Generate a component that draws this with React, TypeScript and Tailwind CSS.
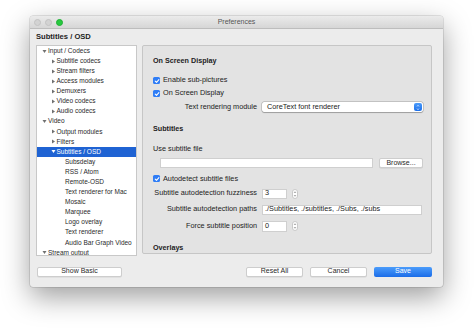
import React from 'react';

type TreeItem = { label: string; level: number; arrow?: 'open' | 'closed'; selected?: boolean };

const TREE: TreeItem[] = [
  { label: 'Input / Codecs', level: 0, arrow: 'open' },
  { label: 'Subtitle codecs', level: 1, arrow: 'closed' },
  { label: 'Stream filters', level: 1, arrow: 'closed' },
  { label: 'Access modules', level: 1, arrow: 'closed' },
  { label: 'Demuxers', level: 1, arrow: 'closed' },
  { label: 'Video codecs', level: 1, arrow: 'closed' },
  { label: 'Audio codecs', level: 1, arrow: 'closed' },
  { label: 'Video', level: 0, arrow: 'open' },
  { label: 'Output modules', level: 1, arrow: 'closed' },
  { label: 'Filters', level: 1, arrow: 'closed' },
  { label: 'Subtitles / OSD', level: 1, arrow: 'open', selected: true },
  { label: 'Subsdelay', level: 2 },
  { label: 'RSS / Atom', level: 2 },
  { label: 'Remote-OSD', level: 2 },
  { label: 'Text renderer for Mac', level: 2 },
  { label: 'Mosaic', level: 2 },
  { label: 'Marquee', level: 2 },
  { label: 'Logo overlay', level: 2 },
  { label: 'Text renderer', level: 2 },
  { label: 'Audio Bar Graph Video', level: 2 },
  { label: 'Stream output', level: 0, arrow: 'open' },
];

const INDENT = ['pl-[5px]', 'pl-[13.5px]', 'pl-[28px]'];

const Arrow = ({ open, white }: { open: boolean; white?: boolean }) => (
  <svg width="5" height="5" viewBox="0 0 10 10" className="mr-[1px] shrink-0">
    {open ? (
      <path d="M1 2 L9 2 L5 8 Z" fill={white ? '#fff' : '#707070'} />
    ) : (
      <path d="M2 1 L8 5 L2 9 Z" fill={white ? '#fff' : '#707070'} />
    )}
  </svg>
);

const Check = () => (
  <span className="w-[7px] h-[7px] rounded-[1.5px] bg-[#2f7df6] flex items-center justify-center shrink-0">
    <svg width="6" height="6" viewBox="0 0 10 10">
      <path d="M2 5.2 L4.2 7.4 L8.2 2.6" stroke="#fff" strokeWidth="1.7" fill="none" strokeLinecap="round" strokeLinejoin="round" />
    </svg>
  </span>
);

const Stepper = () => (
  <span className="ml-[5px] w-[6px] h-[10px] rounded-[3px] bg-white border border-[#c9c9c9] flex flex-col items-center justify-center">
    <svg width="4" height="8" viewBox="0 0 8 16">
      <path d="M2 6 L4 3.5 L6 6 M2 10 L4 12.5 L6 10" stroke="#707070" strokeWidth="1.2" fill="none" />
    </svg>
  </span>
);

const Field = ({ w, children }: { w: string; children?: React.ReactNode }) => (
  <div className={`${w} h-[10.5px] bg-white border border-[#cfcfcf] flex items-center px-[2px] text-[7.3px] text-[#222] whitespace-nowrap overflow-hidden`}>{children}</div>
);

const Btn = ({ w, children }: { w: string; children: React.ReactNode }) => (
  <div className={`${w} h-[10px] bg-white rounded-[2px] border border-[#cdcdcd] shadow-[0_0.5px_0_rgba(0,0,0,0.1)] flex items-center justify-center text-[7px] text-[#2a2a2a]`}>{children}</div>
);

export default function App() {
  return (
    <div className="w-[474px] h-[330px] bg-white overflow-hidden" style={{ fontFamily: '"Liberation Sans", Arial, sans-serif' }}>
      <div className="ml-[30px] mt-[16px] w-[413px] h-[271px] rounded-[3px] bg-[#ececec] shadow-[0_10px_28px_rgba(0,0,0,0.38),0_0_0_0.5px_rgba(0,0,0,0.2)] flex flex-col overflow-hidden">
        {/* title bar */}
        <div className="relative h-[13px] bg-gradient-to-b from-[#ebebeb] to-[#d6d6d6] border-b border-[#bdbdbd] flex items-center pl-[4px] shrink-0">
          <div className="flex gap-[4px]">
            <span className="w-[7px] h-[7px] rounded-full bg-[#d3d3d3] border border-[#c2c2c2]" />
            <span className="w-[7px] h-[7px] rounded-full bg-[#d3d3d3] border border-[#c2c2c2]" />
            <span className="w-[7px] h-[7px] rounded-full bg-[#27c93f] border border-[#1fae33]" />
          </div>
          <div className="absolute inset-0 flex items-center justify-center text-[7px] text-[#555]">Preferences</div>
        </div>

        <div className="flex-1 flex flex-col pl-[6px] pr-[11px]">
          <div className="h-[16px] flex items-center text-[7.6px] font-bold text-[#1e1e1e]">Subtitles / OSD</div>

          <div className="flex gap-[5px] h-[211px]">
            {/* tree */}
            <div className="w-[101px] h-[211px] bg-white border border-[#c8c8c8] overflow-hidden">
              {TREE.map((t) => (
                <div
                  key={t.label}
                  className={`h-[10.1px] flex items-center ${INDENT[t.level]} text-[6.5px] leading-none ${
                    t.selected ? 'bg-[#1f63d3] text-white' : 'text-[#2a2a2a]'
                  }`}
                >
                  {t.arrow && <Arrow open={t.arrow === 'open'} white={t.selected} />}
                  <span>{t.label}</span>
                </div>
              ))}
            </div>

            {/* settings panel */}
            <div className="flex-1 h-[209px] bg-[#e3e3e3] border border-[#c6c6c6] rounded-[2px] flex flex-col pl-[10px] text-[7.3px] text-[#222]">
              <div className="mt-[10px] h-[10px] flex items-center text-[7.2px] font-bold">On Screen Display</div>
              <div className="mt-[9.7px] h-[10px] flex items-center gap-[3px]">
                <Check />
                <span>Enable sub-pictures</span>
              </div>
              <div className="mt-[3px] h-[10px] flex items-center gap-[3px]">
                <Check />
                <span>On Screen Display</span>
              </div>
              <div className="mt-[3.8px] h-[10px] flex items-center">
                <span className="w-[105px] text-right pr-[1px] whitespace-nowrap">Text rendering module</span>
                <div className="ml-[4px] w-[161px] h-[10px] bg-white rounded-[2px] shadow-[0_0_0_0.5px_rgba(0,0,0,0.25),0_0.5px_1px_rgba(0,0,0,0.2)] flex items-center justify-between pl-[5px] pr-[1px]">
                  <span>CoreText font renderer</span>
                  <span className="w-[8px] h-[8px] rounded-[2px] bg-gradient-to-b from-[#4a9bfb] to-[#1c6fe9] flex items-center justify-center">
                    <svg width="4" height="7" viewBox="0 0 8 14">
                      <path d="M2 5 L4 2.5 L6 5 M2 9 L4 11.5 L6 9" stroke="#fff" strokeWidth="1.3" fill="none" />
                    </svg>
                  </span>
                </div>
              </div>
              <div className="mt-[11.5px] h-[10px] flex items-center text-[7.2px] font-bold">Subtitles</div>
              <div className="mt-[10px] h-[10px] flex items-center">Use subtitle file</div>
              <div className="mt-[4px] h-[10px] flex items-center pl-[7px] gap-[6px]">
                <Field w="w-[213px]" />
                <Btn w="w-[44px]">Browse...</Btn>
              </div>
              <div className="mt-[6px] h-[10px] flex items-center gap-[3px]">
                <Check />
                <span>Autodetect subtitle files</span>
              </div>
              <div className="mt-[4.5px] h-[11px] flex items-center">
                <span className="w-[105px] text-right pr-[1px] whitespace-nowrap">Subtitle autodetection fuzziness</span>
                <div className="ml-[4px]"><Field w="w-[25px]">3</Field></div>
                <Stepper />
              </div>
              <div className="mt-[5px] h-[11px] flex items-center">
                <span className="w-[105px] text-right pr-[1px] whitespace-nowrap">Subtitle autodetection paths</span>
                <div className="ml-[4px]"><Field w="w-[160px]">./Subtitles, ./subtitles, ./Subs, ./subs</Field></div>
              </div>
              <div className="mt-[5.5px] h-[11px] flex items-center">
                <span className="w-[105px] text-right pr-[1px] whitespace-nowrap">Force subtitle position</span>
                <div className="ml-[4px]"><Field w="w-[25px]">0</Field></div>
                <Stepper />
              </div>
              <div className="mt-[12px] h-[10px] flex items-center text-[7.2px] font-bold">Overlays</div>
            </div>
          </div>

          {/* bottom buttons */}
          <div className="mt-[10.5px] flex items-center">
            <Btn w="w-[85px] ml-[1px]">Show Basic</Btn>
            <div className="flex-1" />
            <Btn w="w-[57px]">Reset All</Btn>
            <div className="ml-[7px]"><Btn w="w-[57px]">Cancel</Btn></div>
            <div className="ml-[7px] w-[58px] h-[10px] rounded-[2px] bg-gradient-to-b from-[#4b9cfb] to-[#1a6ce8] flex items-center justify-center text-[7px] text-white">Save</div>
          </div>
        </div>
      </div>
    </div>
  );
}
